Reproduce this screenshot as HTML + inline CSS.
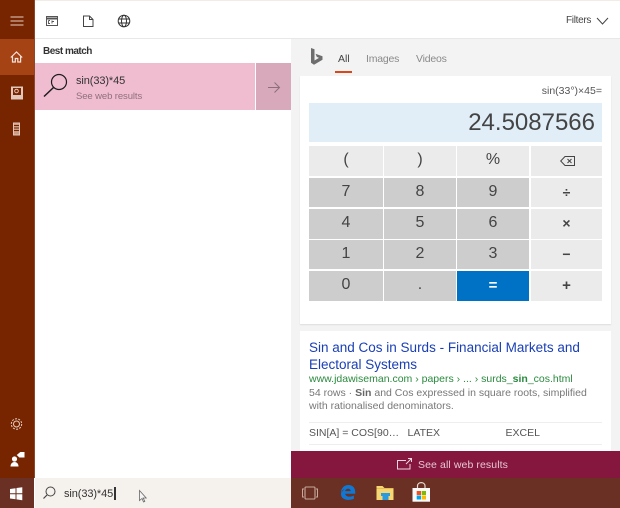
<!DOCTYPE html>
<html><head><meta charset="utf-8">
<style>
html,body{margin:0;padding:0;width:620px;height:508px;overflow:hidden;background:#fff;font-family:"Liberation Sans",sans-serif}
div,span.a{position:absolute;box-sizing:border-box}
svg{position:absolute;overflow:visible}
.t{white-space:nowrap;line-height:1}
.k{display:flex;align-items:center;justify-content:center;color:#444;font-size:16px;padding-bottom:2px}
.l{background:#ebebeb}.d{background:#cdcdcd}
</style></head><body>
<div style="left:0;top:0;width:620px;height:1px;background:#f3ece6"></div>
<div style="left:0;top:0;width:34px;height:478px;background:#772500"></div>
<div style="left:0;top:39px;width:34px;height:36px;background:#a64315"></div>
<div style="left:34px;top:0;width:1px;height:478px;background:#8a4a2a"></div>
<div style="left:35px;top:38px;width:585px;height:1px;background:#e8e8e8"></div>
<div style="left:291px;top:39px;width:329px;height:412px;background:#f3f3f3"></div>

<!-- sidebar icons -->
<svg style="left:0;top:0" width="34" height="478" fill="none" stroke="#e6cfc4" stroke-width="1">
<path d="M10.500 17.500h13M10.500 21.500h13M10.500 25.500h13" transform="translate(0,-0.5)"/>
<path d="M10.800 57.500l5.700-5.500 5.700 5.500M12.500 56.500v5.500h2.800v-3.500h2.500v3.500h2.800v-5.500" stroke-width="1.200" stroke="#f5e5dc"/>
<rect x="11.500" y="87" width="11" height="12" fill="#e2c8ba" stroke="#e2c8ba"/>
<rect x="12.500" y="87.500" width="9" height="8" fill="#772500" stroke="#e2c8ba"/>
<circle cx="16.500" cy="91" r="1.800" stroke="#e2c8ba"/>
<rect x="13.500" y="123" width="6" height="12" fill="#c99d86" stroke="#e2c8ba"/>
<path d="M14 125.500h5M14 128h5M14 130.500h5" stroke="#772500"/>
<circle cx="16.500" cy="424" r="3" stroke="#e6cfc4"/>
<circle cx="16.500" cy="424" r="5.200" stroke="#e6cfc4" stroke-dasharray="2 1.270"/>
<path d="M17.500 455l3-2.500h3.500v4.500h-4.500z" fill="#fff" stroke="#fff"/>
<circle cx="14.500" cy="459" r="2.600" fill="#fff" stroke="none"/>
<path d="M10.500 466.500c0-3 2-4.500 4-4.500s4 1.500 4 4.500z" fill="#fff" stroke="none"/>
</svg>

<!-- top icons -->
<svg style="left:0;top:0" width="160" height="38" fill="none" stroke="#555" stroke-width="1">
<rect x="46.500" y="16.500" width="11" height="9"/>
<path d="M46.500 18.500h11" stroke-width="2"/>
<path d="M48.500 20.500v3h1.500M52 20.500v3M52 21.500h2M48.500 20.500h1.500" stroke-width=".9"/>
<path d="M83.500 16h6l3.500 3.500v7h-9.500zM89.500 16v3.500h3.500" stroke="#444"/>
<circle cx="124" cy="21" r="5.800" stroke="#333"/>
<ellipse cx="124" cy="21" rx="2.500" ry="5.800" stroke="#333"/>
<path d="M118.500 19h11M118.500 23h11" stroke="#333"/>
</svg>

<div class="t" style="left:43px;top:47px;font-size:10px;font-weight:bold;color:#333;letter-spacing:-.5px">Best match</div>

<!-- highlight -->
<div style="left:35px;top:63px;width:220px;height:47px;background:#f0bccf"></div>
<div style="left:256px;top:63px;width:35px;height:47px;background:#d7a9ba"></div>
<svg style="left:0;top:60px" width="291" height="55" fill="none">
<circle cx="59" cy="22" r="7.500" stroke="#1c1c1c" stroke-width="1.200"/>
<path d="M53.500 27.500L44 36.500" stroke="#1c1c1c" stroke-width="1.500"/>
<path d="M268 27.500h11M274.500 22.500l5 5-5 5" stroke="#8c6f7a" stroke-width="1"/>
</svg>
<div class="t" style="left:76px;top:76px;font-size:11px;color:#333;letter-spacing:-.1px">sin(33)*45</div>
<div class="t" style="left:76px;top:92px;font-size:9.500px;color:#8f707c;letter-spacing:-.1px">See web results</div>

<!-- filters -->
<div class="t" style="left:566px;top:16px;font-size:10px;color:#444;letter-spacing:-.3px">Filters</div>
<svg style="left:0;top:0" width="620" height="38" fill="none"><path d="M597 18l5.500 6 5.500-6" stroke="#444" stroke-width="1"/></svg>

<!-- bing -->
<svg style="left:0;top:0" width="340" height="70"><path d="M311 48l3.500 1.200v11.300l4.500-2.600-2.200-1-1.300-3.200 7 2.500v3.600l-8.500 5-3-2.100z" fill="#6e6e6e"/></svg>
<div class="t" style="left:338px;top:54px;font-size:10.500px;color:#444">All</div>
<div style="left:335px;top:71px;width:17px;height:2px;background:#d9471c"></div>
<div class="t" style="left:366px;top:54px;font-size:10.500px;color:#8a8a8a;letter-spacing:-.2px">Images</div>
<div class="t" style="left:416px;top:54px;font-size:10.500px;color:#8a8a8a;letter-spacing:-.2px">Videos</div>

<!-- calc card -->
<div style="left:300px;top:76px;width:311px;height:248px;background:#fff;box-shadow:0 1px 1px #ddd"></div>
<div class="t" style="right:18px;top:86px;font-size:10.500px;color:#555">sin(33°)×45=</div>
<div style="left:309px;top:103px;width:293px;height:39px;background:#e1eef8"></div>
<div class="t" style="right:25px;top:111px;font-size:24px;color:#444">24.5087566</div>

<div class="k l" style="left:309px;top:146px;width:74px;height:30px">(</div>
<div class="k l" style="left:384px;top:146px;width:72px;height:30px">)</div>
<div class="k l" style="left:457px;top:146px;width:72px;height:30px">%</div>
<div class="k l" style="left:531px;top:146px;width:71px;height:30px"><svg style="left:29px;top:9px" width="16" height="12" fill="none" stroke="#444"><path d="M5 1.500h9.500v9H5L.7 6zM7.500 4l4 4M11.500 4l-4 4"/></svg></div>

<div class="k d" style="left:309px;top:178px;width:74px;height:29px">7</div>
<div class="k d" style="left:384px;top:178px;width:72px;height:29px">8</div>
<div class="k d" style="left:457px;top:178px;width:72px;height:29px">9</div>
<div class="k l" style="left:531px;top:178px;width:71px;height:29px;font-size:14px;font-weight:bold">÷</div>

<div class="k d" style="left:309px;top:209px;width:74px;height:30px">4</div>
<div class="k d" style="left:384px;top:209px;width:72px;height:30px">5</div>
<div class="k d" style="left:457px;top:209px;width:72px;height:30px">6</div>
<div class="k l" style="left:531px;top:209px;width:71px;height:30px;font-size:14px;font-weight:bold">×</div>

<div class="k d" style="left:309px;top:240px;width:74px;height:29px">1</div>
<div class="k d" style="left:384px;top:240px;width:72px;height:29px">2</div>
<div class="k d" style="left:457px;top:240px;width:72px;height:29px">3</div>
<div class="k l" style="left:531px;top:240px;width:71px;height:29px;font-size:14px;font-weight:bold">−</div>

<div class="k d" style="left:309px;top:271px;width:74px;height:30px">0</div>
<div class="k d" style="left:384px;top:271px;width:72px;height:30px">.</div>
<div class="k" style="left:457px;top:271px;width:72px;height:30px;background:#0072c6;color:#fff;font-weight:bold;font-size:15px">=</div>
<div class="k l" style="left:531px;top:271px;width:71px;height:30px;font-size:15px;font-weight:bold">+</div>

<!-- result card -->
<div style="left:300px;top:331px;width:311px;height:120px;background:#fff"></div>
<div style="left:309px;top:339px;width:290px;font-size:13.500px;line-height:17px;color:#1a3fb5">Sin and Cos in Surds - Financial Markets and Electoral Systems</div>
<div class="t" style="left:309px;top:374px;font-size:10.500px;color:#2a8a3e">www.jdawiseman.com › papers › ... › surds_<b>sin</b>_cos.html</div>
<div class="t" style="left:309px;top:388px;font-size:10.500px;color:#777">54 rows · <b style="color:#666">Sin</b> and Cos expressed in square roots, simplified</div>
<div class="t" style="left:309px;top:401px;font-size:10.500px;color:#777">with rationalised denominators.</div>
<div style="left:309px;top:422px;width:293px;height:1px;background:#eee"></div>
<div class="t" style="left:309px;top:428px;font-size:10.500px;color:#555">SIN[A] = COS[90…</div>
<div class="t" style="left:407.500px;top:428px;font-size:10.500px;color:#555">LATEX</div>
<div class="t" style="left:505.500px;top:428px;font-size:10.500px;color:#555">EXCEL</div>
<div style="left:309px;top:444px;width:293px;height:1px;background:#eee"></div>

<!-- footer -->
<div style="left:291px;top:451px;width:329px;height:27px;background:#85173f"></div>
<svg style="left:0;top:451px" width="620" height="27" fill="none" stroke="#eed5de" stroke-width="1"><path d="M406 9.500h-8.500v8.500h12.500v-5M406 13l5-5M408 7.500h3.500V11"/></svg>
<div class="t" style="left:418px;top:460px;font-size:10.500px;color:#e6c6d2;letter-spacing:.1px">See all web results</div>

<!-- taskbar -->
<div style="left:0;top:478px;width:34px;height:30px;background:#693023"></div>
<div style="left:35px;top:478px;width:256px;height:30px;background:#f5f1ed"></div>
<div style="left:291px;top:478px;width:329px;height:30px;background:#693023"></div>

<svg style="left:0;top:478px" width="620" height="30" fill="none">
<path d="M10 11l5.500-.8v5H10zM16.500 10l5.800-.8v6h-5.800zM10 16.200h5.500v5L10 20.500zM16.500 16.200h5.800v6l-5.800-.8z" fill="#fff"/>
<circle cx="50.500" cy="13.500" r="4.500" stroke="#444" stroke-width="1"/>
<path d="M47 17l-3.500 3.500" stroke="#444" stroke-width="1.200"/>
<path d="M139.500 12.500v10l2.500-2 1.500 3.500 1.300-.6-1.600-3.400h3z" fill="#f4f4f4" stroke="#666" stroke-width=".8"/>
<rect x="305" y="9" width="10" height="12" rx="1" stroke="#c9a99d" stroke-width="1.100"/>
<path d="M304 11h-1.500v8h1.500M316 11h1.500v8H316" stroke="#c9a99d" stroke-width="1"/>
<g transform="translate(341,7) scale(.92,.87) translate(-341,-5)"><path d="M341 13c.5-5 4-8 8-8 4.500 0 7.500 3 7.500 8.500v1.500h-11c.5 3.500 5 4.500 9.500 2v4c-6 2.500-14 1-14-5.500 0-2.500 1.500-5 4-6-1 .7-1.500 1.500-2 2.500zM345.500 12h6c0-3.500-5.500-3.500-6 0z" fill="#0f78d4" fill-rule="evenodd"/></g>
<path d="M376.500 8h6l2 2h9v12h-17z" fill="#f6d774"/>
<path d="M381 15h9v3h-1.500v4h-6v-4H381z" fill="#2b9be0"/>
<path d="M376.500 10.500h17" stroke="#e7bd52"/>
<path d="M417.500 10V8c0-4.500 7.500-4.500 7.500 0v2" stroke="#e6d8d2" stroke-width="1.200"/>
<rect x="412.500" y="10" width="17.500" height="13.700" fill="#fafafa"/>
<rect x="416.700" y="13" width="4.300" height="4" fill="#f25022"/>
<rect x="421.700" y="13" width="4.300" height="4" fill="#7fba00"/>
<rect x="416.700" y="17.500" width="4.300" height="4" fill="#00a4ef"/>
<rect x="421.700" y="17.500" width="4.300" height="4" fill="#ffb900"/>
</svg>
<div class="t" style="left:64px;top:489px;font-size:11px;color:#333;letter-spacing:-.1px">sin(33)*45</div>
<div style="left:113.500px;top:487px;width:2px;height:13px;background:#333"></div>
</body></html>
